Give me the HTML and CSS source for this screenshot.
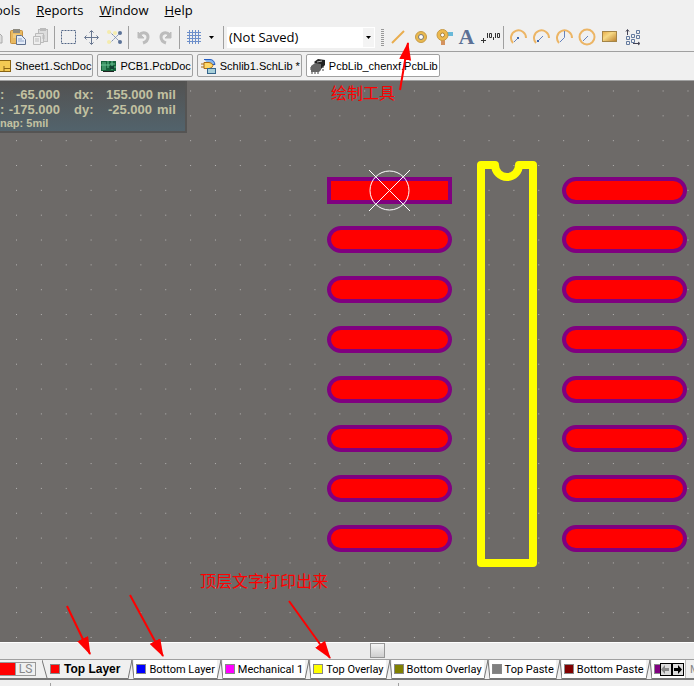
FILE: index.html
```
<!DOCTYPE html>
<html lang="en">
<head>
  <meta charset="UTF-8">
  <meta name="viewport" content="width=device-width, initial-scale=1.0">
  <title>PcbLib_chenxf.PcbLib</title>
  <link rel="stylesheet" href="styles.css">
</head>
<body>
  <nav class="menubar">
    <a href="#" class="clipped">ools</a>
    <a href="#"><u>R</u>eports</a>
    <a href="#"><u>W</u>indow</a>
    <a href="#"><u>H</u>elp</a>
  </nav>

  <div class="toolbar">
    <button type="button" class="tool first" aria-label="Copy">
      <svg width="18" height="18"><path d="M8 5h5l3 3v7H8z" fill="#ddd" stroke="#aaa"/></svg>
    </button>
    <button type="button" class="tool" aria-label="Paste">
      <svg width="18" height="18"><rect x="1.500" y="2.500" width="12" height="13" rx="1" fill="#e9b960" stroke="#c49040"/><rect x="4" y="1" width="7" height="4" fill="#8d8a80"/><path d="M4 7h7M4 9h5" stroke="#f7dda2"/><path d="M7.500 7.500h5l4 4v5h-9z" fill="#e4ecf8" stroke="#60718f"/><path d="M9 11h4M9 13h6" stroke="#8fa4c8"/></svg>
    </button>
    <button type="button" class="tool" aria-label="Paste special">
      <svg width="18" height="18"><rect x="6.500" y="1.500" width="9" height="12" fill="#ddd" stroke="#bbb"/><rect x="8" y="0" width="6" height="3" fill="#bbb"/><path d="M3.500 5.500h8v9h-8z" fill="#e6e6e6" stroke="#bbb"/><path d="M1.500 8.500h7v8h-7z" fill="#eee" stroke="#bbb"/><path d="M3 11h4M3 13h4M10 8h3M10 10h3" stroke="#bbb"/></svg>
    </button>
    <span class="sep"></span>
    <button type="button" class="tool" aria-label="Select area">
      <svg width="18" height="18"><rect x="1.500" y="2.500" width="14" height="13" fill="none" stroke="#536686" stroke-dasharray="2 1"/></svg>
    </button>
    <button type="button" class="tool" aria-label="Move">
      <svg width="18" height="18" fill="none" stroke="#66758f"><path d="M8.500 3v13M2 9.500h13"/><path d="M6.500 4.500l2-2 2 2M6.500 14.500l2 2 2-2M3.500 7.500l-2 2 2 2M13.500 7.500l2 2-2 2"/></svg>
    </button>
    <button type="button" class="tool" aria-label="Clear filter">
      <svg width="18" height="18"><path d="M4 4l9 9M4 15l9-9" stroke="#7083a5" stroke-dasharray="2 1"/><circle cx="14" cy="5" r="2" fill="#5b7297"/><circle cx="14" cy="14" r="2" fill="#5b7297"/><circle cx="9" cy="5" r="2" fill="#f5ecae"/><circle cx="3" cy="4" r="2" fill="#f5ecae"/><circle cx="3" cy="14" r="2" fill="#f5ecae"/></svg>
    </button>
    <span class="sep"></span>
    <button type="button" class="tool" aria-label="Undo">
      <svg width="18" height="18" fill="none" stroke="#bcbcbc"><path d="M5 7c4-4 9-2 9 2 0 3-2 5-5 6" stroke-width="3"/><path d="M4 4v6h6z" fill="#bcbcbc"/></svg>
    </button>
    <button type="button" class="tool" aria-label="Redo">
      <svg width="18" height="18" fill="none" stroke="#bcbcbc"><path d="M13 7c-4-4-9-2-9 2 0 3 2 5 5 6" stroke-width="3"/><path d="M14 4v6H8z" fill="#bcbcbc"/></svg>
    </button>
    <span class="sep"></span>
    <button type="button" class="tool" aria-label="Grid">
      <svg width="18" height="18" stroke="#6d8fca"><path d="M4.500 2v14M7.500 2v14M10.500 2v14M13.500 2v14M2 4.500h14M2 7.500h14M2 10.500h14M2 13.500h14"/></svg>
    </button>
    <button type="button" class="caret" aria-label="Grid menu"><svg width="5" height="3"><path d="M0 0h5L2.500 3z"/></svg></button>
    <span class="sep wide"></span>
    <div class="combo">
      <select aria-label="Saved filter"><option>(Not Saved)</option></select>
      <span class="combo-arrow"><svg width="5" height="3"><path d="M0 0h5L2.500 3z"/></svg></span>
    </div>
    <span class="grip"></span>
    <button type="button" class="tool" aria-label="Place line">
      <svg width="18" height="18"><path d="M3 15L15 3" stroke="#e9ad4e" stroke-width="2"/></svg>
    </button>
    <button type="button" class="tool" aria-label="Place pad">
      <svg width="18" height="18"><circle cx="9" cy="9" r="5.500" fill="#e9b94f" stroke="#c79b48"/><circle cx="9" cy="9" r="2.500" fill="#fff" stroke="#777"/></svg>
    </button>
    <button type="button" class="tool" aria-label="Place via">
      <svg width="18" height="18"><rect x="9" y="4" width="9" height="4" fill="#69b9d9"/><rect x="6" y="9" width="4" height="8" fill="#d4935f"/><circle cx="7.500" cy="7" r="5.500" fill="#edb94d" stroke="#c79b48"/><circle cx="7.500" cy="7" r="2" fill="#fff" stroke="#a98037"/></svg>
    </button>
    <button type="button" class="tool letter">A</button>
    <button type="button" class="tool" aria-label="Place coordinate">
      <svg width="20" height="18" fill="none" stroke="#333"><path d="M1 12.500h5M3.500 10v5M7.500 5v5M9.500 5.500h2v4h-2zM13.500 9v3M15.500 5v5M17.500 5.500h2v4h-2z"/></svg>
    </button>
    <span class="sep"></span>
    <button type="button" class="tool" aria-label="Arc by center">
      <svg width="18" height="18" fill="none"><path d="M4 15A7.500 7.500 0 1 1 17 10" stroke="#ecb565" stroke-width="2"/><path d="M5 14l4-4" stroke="#6583bd"/><rect x="8" y="9" width="2" height="2" fill="#3d65ad"/></svg>
    </button>
    <button type="button" class="tool" aria-label="Arc by edge">
      <svg width="18" height="18" fill="none"><path d="M4 15A7.500 7.500 0 1 1 17 10" stroke="#ecb565" stroke-width="2"/><path d="M5 14l6-6" stroke="#6583bd"/><rect x="5" y="12" width="2" height="2" fill="#3d65ad"/></svg>
    </button>
    <button type="button" class="tool" aria-label="Arc any angle">
      <svg width="18" height="18" fill="none"><path d="M4 15A7.500 7.500 0 1 1 17 10" stroke="#ecb565" stroke-width="2"/><path d="M5 14l4.500-4.500V3" stroke="#6583bd"/></svg>
    </button>
    <button type="button" class="tool" aria-label="Full circle">
      <svg width="18" height="18" fill="none"><circle cx="9" cy="9" r="7.500" stroke="#ecb565" stroke-width="2"/><path d="M5 13l5-5" stroke="#6583bd"/></svg>
    </button>
    <button type="button" class="tool" aria-label="Place fill">
      <svg width="18" height="18"><defs><linearGradient id="fill" x2="1" y2="1"><stop stop-color="#e7aa45"/><stop offset=".4" stop-color="#f6d985"/><stop offset="1" stop-color="#bb7f2d"/></linearGradient></defs><rect x="1.500" y="3.500" width="14" height="10" fill="url(#fill)" stroke="#a48548"/></svg>
    </button>
    <button type="button" class="tool" aria-label="Array placement">
      <svg width="18" height="18" fill="none" stroke="#647b9f"><path d="M7.500 6.500h3v3h-3zM12.500 2.500h3v3h-3zM2.500 8.500h3v3h-3zM12.500 7.500h3v3h-3zM7.500 11.500h3v3h-3zM2.500 13.500h3v3h-3z"/><path d="M3.500 7V2M2 3.500l1.500-2 1.500 2M9 15.500h6M14 14l2 1.500-2 1.500" stroke="#445"/></svg>
    </button>
  </div>

  <div class="doc-tabs">
    <button type="button" class="doc-tab first">
      <svg width="16" height="16"><rect x="1.500" y="2.500" width="13" height="11" fill="#f4ca53" stroke="#8a6414"/><path d="M8 10.500h6M8 13V8" stroke="#8a6414"/></svg>
      Sheet1.SchDoc
    </button>
    <button type="button" class="doc-tab">
      <svg width="16" height="16"><rect y="3" width="15" height="10" fill="#15623b"/><path d="M2 4v8M4 4v8M7 3v7M11 3v9M0 7h9M9 6h5M9 9h6" stroke="#66c291"/><path d="M2 13.500h11" stroke="#222"/><rect x="9" y="8" width="4" height="3" fill="#143"/></svg>
      PCB1.PcbDoc
    </button>
    <button type="button" class="doc-tab">
      <svg width="16" height="16"><path d="M3 1.500h6q4 0 5 5H8" fill="#87b5ec" stroke="#235cc0"/><path d="M3 4.500h5q3 0 4 3-1 3-4 3H3z" fill="#ffd968" stroke="#a86b16"/><path d="M0 6h3M0 9h3" stroke="#a86b16"/><rect x="6.500" y="10.500" width="8" height="5" fill="#a8cfd9" stroke="#35658c"/></svg>
      Schlib1.SchLib *
    </button>
    <button type="button" class="doc-tab active">
      <svg width="16" height="16"><path d="M4 4l4-3 7 1v5l-4 4z" fill="#222"/><path d="M7 4l5-1" stroke="#bbb"/><path d="M1 8l4-3 6 1v6l-2 2H1z" fill="#666"/><path d="M2 14v2M5 14v2M8 14v2M0 9v3M12 9h2M12 12h2" stroke="#444"/></svg>
      PcbLib_chenxf.PcbLib
    </button>
  </div>

  <main class="board">
    <svg class="drawing" width="100%" height="561">
      <defs>
        <pattern id="grid" x="16" y="84" width="24.870" height="24.840" patternUnits="userSpaceOnUse">
          <rect width="1" height="1" fill="#b4b2b1"/>
        </pattern>
        <rect id="pad" x="2" y="2" width="121" height="23" rx="12"/>
      </defs>
      <rect width="100%" height="100%" fill="url(#grid)"/>

      <g fill="#f00" stroke="#800080" stroke-width="4">
        <rect x="329" y="98" width="121" height="23"/>
        <use href="#pad" x="327" y="145"/>
        <use href="#pad" x="327" y="195"/>
        <use href="#pad" x="327" y="245"/>
        <use href="#pad" x="327" y="295"/>
        <use href="#pad" x="327" y="344"/>
        <use href="#pad" x="327" y="394"/>
        <use href="#pad" x="327" y="444"/>
        <use href="#pad" x="562" y="96"/>
        <use href="#pad" x="562" y="145"/>
        <use href="#pad" x="562" y="195"/>
        <use href="#pad" x="562" y="245"/>
        <use href="#pad" x="562" y="295"/>
        <use href="#pad" x="562" y="344"/>
        <use href="#pad" x="562" y="394"/>
        <use href="#pad" x="562" y="444"/>
      </g>

      <!-- package outline on the top overlay -->
      <path d="M495 84H481V482H533V84H519A12 12 0 0 1 495 84" fill="none" stroke="#ff0" stroke-width="8" stroke-linejoin="round" stroke-linecap="round"/>

      <!-- origin marker -->
      <g fill="none" stroke="#fff">
        <circle cx="389.500" cy="109.500" r="19.500"/>
        <path d="M369 89l41 41M410 89l-41 41"/>
      </g>
    </svg>

    <div class="hud">
      <div class="hud-grid">
        <span>:</span><span class="num">-65.000</span><span>dx:</span><span class="num">155.000</span><span>mil</span>
        <span>:</span><span class="num">-175.000</span><span>dy:</span><span class="num">-25.000</span><span>mil</span>
      </div>
      <div class="snap">nap: 5mil</div>
    </div>
    <span class="note note-tools">绘制工具</span>
    <span class="note note-overlay">顶层文字打印出来</span>
  </main>

  <div class="scrollbar"><span class="thumb"></span></div>

  <div class="layers">
    <span class="current"></span>
    <button type="button" class="ls">LS</button>
    <svg class="slant" width="6" height="19"><path d="M0 0L5 18" /></svg>
    <button type="button" class="layer active"><i class="red"></i>Top Layer</button>
    <svg class="slant" width="6" height="19"><path d="M0 19L4 0L6 19"/></svg>
    <button type="button" class="layer"><i class="blue"></i>Bottom Layer</button>
    <svg class="slant" width="6" height="19"><path d="M0 19L4 0L6 19"/></svg>
    <button type="button" class="layer"><i class="magenta"></i>Mechanical 1</button>
    <svg class="slant" width="6" height="19"><path d="M0 19L4 0L6 19"/></svg>
    <button type="button" class="layer"><i class="yellow"></i>Top Overlay</button>
    <svg class="slant" width="6" height="19"><path d="M0 19L4 0L6 19"/></svg>
    <button type="button" class="layer"><i class="olive"></i>Bottom Overlay</button>
    <svg class="slant" width="6" height="19"><path d="M0 19L4 0L6 19"/></svg>
    <button type="button" class="layer"><i class="gray"></i>Top Paste</button>
    <svg class="slant" width="6" height="19"><path d="M0 19L4 0L6 19"/></svg>
    <button type="button" class="layer"><i class="maroon"></i>Bottom Paste</button>
    <svg class="slant" width="6" height="19"><path d="M0 19L4 0L6 19"/></svg>
    <div class="layer-end">
      <i class="purple"></i>
      <div class="steps">
        <button type="button" aria-label="Previous layers"><svg width="9" height="9"><path d="M0 4.500L4 0v3h4v3H4v3z" fill="#888"/></svg></button>
        <button type="button" aria-label="Next layers"><svg width="9" height="9"><path d="M9 4.500L5 0v3H1v3h4v3z"/></svg></button>
      </div>
    </div>
    <button type="button" class="mask">M</button>
  </div>

  <footer class="status"><span></span><span></span></footer>

  <svg class="arrows" width="694" height="686">
    <defs>
      <marker id="head" markerUnits="userSpaceOnUse" markerWidth="18" markerHeight="12" refX="17" refY="6" orient="auto">
        <path d="M0 0L18 6L0 12z" fill="#f00"/>
      </marker>
    </defs>
    <g stroke="#f00" stroke-width="2">
      <path d="M67 606L90 654" marker-end="url(#head)"/>
      <path d="M130 595L163 656" marker-end="url(#head)"/>
      <path d="M289 601L330 658" marker-end="url(#head)"/>
      <path d="M400 90L408 43" marker-end="url(#head)"/>
    </g>
  </svg>
</body>
</html>
```

FILE: styles.css
```
* {
  box-sizing: border-box;
}

body {
  position: relative;
  margin: 0;
  background: #f0f0f0;
  color: #000;
  font-family: "Liberation Sans", Arial, sans-serif;
  font-size: 11px;
  overflow: hidden;
}

button {
  flex: none;
  margin: 0;
  padding: 0;
  border: 0;
  background: none;
  color: inherit;
  font: inherit;
  white-space: nowrap;
}

svg {
  display: block;
  flex: none;
}

/* menu */

.menubar {
  display: flex;
  gap: 16px;
  height: 24px;
  font-family: "Open Sans", sans-serif;
  font-size: 13px;
  line-height: 20px;
}

.menubar a {
  color: #000;
  text-decoration: none;
}

.menubar .clipped {
  margin-left: -5px;
}

/* toolbar */

.toolbar {
  display: flex;
  align-items: center;
  height: 28px;
  border-bottom: 1px solid #a0a0a0;
}

.tool {
  display: flex;
  align-items: center;
  justify-content: center;
  width: 23px;
  height: 24px;
  padding-bottom: 2px;
}

.tool.first {
  margin-left: -17px;
}

.sep {
  flex: none;
  width: 1px;
  height: 23px;
  margin: 0 2px;
  background: #a0a0a0;
}

.sep.wide {
  margin: 0 3px 0 5px;
}

.caret {
  display: flex;
  align-items: center;
  justify-content: center;
  width: 13px;
  height: 24px;
}

.combo {
  position: relative;
  flex: none;
  width: 148px;
  height: 21px;
}

.combo select {
  width: 100%;
  height: 100%;
  padding: 0 2px 1px;
  border: 0;
  appearance: none;
  background: #fff;
  color: #000;
  font-family: "Open Sans", sans-serif;
  font-size: 13px;
}

.combo-arrow {
  position: absolute;
  top: 1px;
  right: 1px;
  bottom: 1px;
  display: flex;
  align-items: center;
  justify-content: center;
  width: 11px;
  background: #f4f4f4;
  pointer-events: none;
}

.grip {
  flex: none;
  width: 3px;
  height: 17px;
  margin: 0 2px 0 6px;
  background: repeating-linear-gradient(#999 0 1px, #f0f0f0 1px 2px);
}

.letter {
  color: #5b7096;
  font-family: "Liberation Serif", serif;
  font-size: 22px;
  font-weight: bold;
}

/* open documents */

.doc-tabs {
  display: flex;
  gap: 4px;
  height: 29px;
  padding-top: 2px;
  border-bottom: 1px solid #a0a0a0;
}

.doc-tab {
  display: flex;
  align-items: center;
  gap: 3px;
  height: 23px;
  padding: 0 1px 0 3px;
  border: 1px solid #a0a0a0;
  border-radius: 2px;
}

.doc-tab.first {
  margin-left: -8px;
}

.doc-tab.active {
  background: #fff;
}

/* board */

.board {
  position: relative;
  background: #6d6a68;
}

.hud {
  position: absolute;
  top: 0;
  left: 0;
  width: 187px;
  height: 52px;
  padding-top: 6px;
  border: solid #555453;
  border-width: 0 2px 2px 0;
  background: linear-gradient(#535251, #52636c);
  color: #c2c1a1;
  font-weight: bold;
}

.hud-grid {
  display: grid;
  grid-template-columns: 4px 56px 14px 32px 46px 5px 20px;
  font-size: 13px;
  line-height: 15px;
}

.hud-grid span:nth-child(5n + 1) { grid-column: 1; }
.hud-grid span:nth-child(5n + 2) { grid-column: 2; }
.hud-grid span:nth-child(5n + 3) { grid-column: 4; }
.hud-grid span:nth-child(5n + 4) { grid-column: 5; }
.hud-grid span:nth-child(5n) { grid-column: 7; }

.num {
  text-align: right;
}

.snap {
  font-size: 11px;
  line-height: 12px;
}

.note {
  position: absolute;
  color: #f00;
  font-family: "Noto Sans CJK SC", sans-serif;
  font-size: 16px;
  line-height: 20px;
  white-space: nowrap;
}

.note-tools {
  top: 1px;
  left: 331px;
}

.note-overlay {
  top: 489px;
  left: 200px;
}

.scrollbar {
  height: 17px;
  padding-left: 370px;
  border-top: 1px solid #fff;
  background: #ececec;
}

.thumb {
  display: block;
  width: 15px;
  height: 15px;
  border: 1px solid #979797;
  background: linear-gradient(#f4f4f4, #cfcfcf);
}

/* layer tabs */

.layers {
  display: flex;
  align-items: center;
  height: 21px;
  border-top: 1px solid #a0a0a0;
  border-bottom: 2px solid #777;
  font-family: Roboto, sans-serif;
}

.current {
  flex: none;
  width: 15px;
  height: 14px;
  border: solid #999;
  border-width: 1px 0;
  background: #f00;
}

.ls {
  width: 21px;
  height: 14px;
  margin-right: 6px;
  border: 1px solid #999;
  color: #888;
  font-size: 12px;
  line-height: 12px;
}

.slant {
  fill: #f0f0f0;
  stroke: #777;
}

.layer {
  display: flex;
  align-items: center;
  gap: 3px;
  height: 18px;
  padding: 0 2px;
  background: #fff;
}

.layer.active {
  gap: 4px;
  padding-right: 8px;
  background: #f0f0f0;
  font-family: "Liberation Sans", Arial, sans-serif;
  font-size: 12px;
  font-weight: bold;
}

.layers i {
  flex: none;
  width: 10px;
  height: 10px;
  border: 1px solid #888;
}

.red { background: #f00; }
.blue { background: #00f; }
.magenta { background: #f0f; }
.yellow { background: #ff0; }
.olive { background: #808000; }
.gray { background: #808080; }
.maroon { background: #800000; }
.purple { background: #800080; }

.layer-end {
  display: flex;
  flex: 1;
  align-items: center;
  height: 18px;
  padding-left: 2px;
  background: #fff;
}

.steps {
  display: flex;
  flex: none;
  margin-left: -4px;
}

.steps button {
  display: flex;
  align-items: center;
  justify-content: center;
  width: 12px;
  height: 13px;
  border: 1px solid #000;
  background: #ddd;
}

.mask {
  width: 9px;
  height: 18px;
  padding-left: 4px;
  border-left: 1px solid #bbb;
  background: #f0f0f0;
  color: #888;
  text-align: left;
}

.status {
  display: flex;
  height: 6px;
  padding-top: 3px;
}

.status span {
  width: 51px;
  border-right: 1px solid #a0a0a0;
}

.status span + span {
  width: 348px;
}

.arrows {
  position: absolute;
  top: 0;
  left: 0;
  pointer-events: none;
}
```
